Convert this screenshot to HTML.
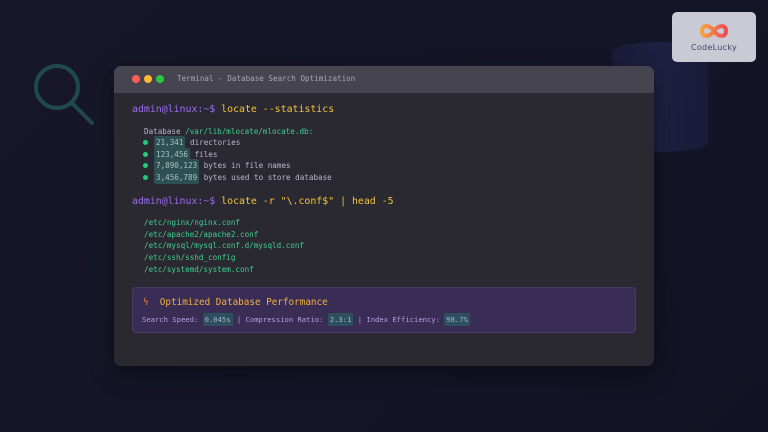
<!DOCTYPE html>
<html><head><style>
*{margin:0;padding:0;box-sizing:border-box}
body{width:768px;height:432px;overflow:hidden;background:linear-gradient(135deg,#171729 0%,#141527 60%,#111324 100%);font-family:"DejaVu Sans Mono","Liberation Mono",monospace;position:relative}
.cyl{position:absolute;left:612px;top:42px;width:96px;height:110px;background:linear-gradient(90deg,#1d1d3c,#202349,#1a1c3c);border-radius:48px/10px;opacity:.8}
.logo{position:absolute;left:672px;top:12px;width:84px;height:50px;background:#c9cad3;border-radius:5px}
.logo span{position:absolute;left:0;width:84px;top:31px;text-align:center;font-family:"DejaVu Sans",sans-serif;font-size:8px;color:#3a4a6a;letter-spacing:.3px}
.term{position:absolute;left:114px;top:66px;width:540px;height:300px;background:#2a2831;border-radius:7px;overflow:hidden;box-shadow:0 8px 24px rgba(0,0,0,.4)}
.bar{height:27px;background:#46444f;position:relative}
.dot{position:absolute;top:9px;width:8px;height:8px;border-radius:50%}
.bar .t{position:absolute;left:63px;top:8px;font-size:7.6px;color:#a7a5b3}
.l{position:absolute;white-space:pre}
.p{font-size:9.9px;color:#f0c43c}
.p b{font-weight:normal;color:#9d6cf0}
.o{font-size:7.6px;color:#b9b9c4}
.g{color:#3fcf8e}
.n{background:#2f5052;color:#a8c0c0;padding:2px 2px;border-radius:2px}
.bd{display:inline-block;width:5px;height:5px;border-radius:50%;background:#22c97a;margin-right:6px;vertical-align:0px}
.box{position:absolute;left:18px;top:221px;width:504px;height:46px;background:#3a2d55;border:1px solid #4a3a6a;border-radius:4px}
.v{background:#2e4f5e;color:#9fb5cf;padding:2px 2px;border-radius:2px}
</style></head><body>
<div class="cyl"></div>
<svg style="position:absolute;left:30px;top:60px" width="70" height="70"><circle cx="27" cy="27" r="21" fill="none" stroke="#1f4a4d" stroke-width="4"/><line x1="42" y1="43" x2="62" y2="63" stroke="#1f4a4d" stroke-width="4" stroke-linecap="round"/></svg>
<div class="logo"><svg style="position:absolute;left:27px;top:9px" width="30" height="20" viewBox="0 0 30 20"><defs><linearGradient id="lg" x1="0" x2="1"><stop offset="0" stop-color="#f7a23a"/><stop offset="1" stop-color="#ef4a5a"/></linearGradient></defs><path d="M15 10C11 4 3 3 3 10s8 6 12 0 12-7 12 0-8 6-12 0" fill="none" stroke="url(#lg)" stroke-width="4"/></svg><span>CodeLucky</span></div>
<div class="term">
<div class="bar"><div class="dot" style="left:18px;background:#ff5f57"></div><div class="dot" style="left:30px;background:#febc2e"></div><div class="dot" style="left:42px;background:#28c840"></div><div class="t">Terminal - Database Search Optimization</div></div>
<div class="l p" style="left:18px;top:38px"><b>admin@linux:~$</b> locate --statistics</div>
<div class="l o" style="left:30px;top:61px">Database <span class="g">/var/lib/mlocate/mlocate.db:</span></div>
<div class="l o" style="left:29px;top:72px"><span class="bd"></span><span class="n">21,341</span> directories</div>
<div class="l o" style="left:29px;top:84px"><span class="bd"></span><span class="n">123,456</span> files</div>
<div class="l o" style="left:29px;top:95px"><span class="bd"></span><span class="n">7,890,123</span> bytes in file names</div>
<div class="l o" style="left:29px;top:107px"><span class="bd"></span><span class="n">3,456,789</span> bytes used to store database</div>
<div class="l p" style="left:18px;top:130px"><b>admin@linux:~$</b> locate -r "\.conf$" | head -5</div>
<div class="l o g" style="left:30px;top:151px;line-height:11.7px">/etc/nginx/nginx.conf
/etc/apache2/apache2.conf
/etc/mysql/mysql.conf.d/mysqld.conf
/etc/ssh/sshd_config
/etc/systemd/system.conf</div>
<div class="box">
<div class="l" style="left:10px;top:9px;font-size:9.3px;color:#f0b040"><span style="color:#f08030">ϟ</span>&nbsp; Optimized Database Performance</div>
<div class="l" style="left:9px;top:27px;font-size:7.2px;color:#b89ae8">Search Speed: <span class="v">0.045s</span> | Compression Ratio: <span class="v">2.3:1</span> | Index Efficiency: <span class="v">98.7%</span></div>
</div>
</div>
</body></html>
